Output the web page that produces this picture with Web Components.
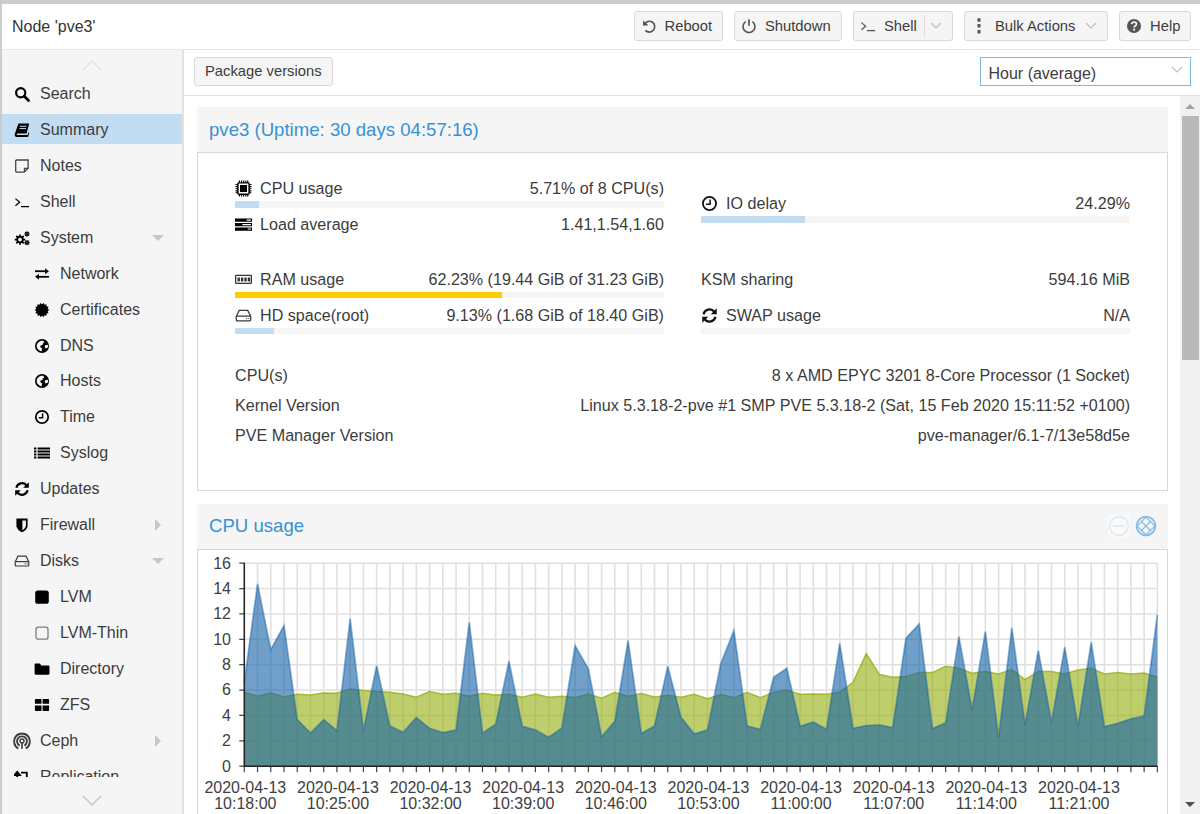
<!DOCTYPE html>
<html><head><meta charset="utf-8"><title>Node pve3</title>
<style>
html,body{margin:0;padding:0;height:814px;overflow:hidden;background:#ccc}
</style></head>
<body>
<pve-app>
  <pve-header slot="header" title-text="Node 'pve3'">
    <pve-button icon="undo" style="--iw:89.5px">Reboot</pve-button>
    <pve-button icon="power" style="--iw:108px">Shutdown</pve-button>
    <pve-button icon="terminal" split style="--iw:100px">Shell</pve-button>
    <pve-button icon="dots" menu style="--iw:144px">Bulk Actions</pve-button>
    <pve-button icon="question" style="--iw:72px">Help</pve-button>
  </pve-header>
  <pve-sidebar slot="side">
    <nav-item icon="search">Search</nav-item>
    <nav-item icon="book" selected>Summary</nav-item>
    <nav-item icon="note">Notes</nav-item>
    <nav-item icon="terminal">Shell</nav-item>
    <nav-item icon="cogs" arrow="down">System</nav-item>
    <nav-item icon="exchange" sub>Network</nav-item>
    <nav-item icon="cert" sub>Certificates</nav-item>
    <nav-item icon="globe" sub>DNS</nav-item>
    <nav-item icon="globe" sub>Hosts</nav-item>
    <nav-item icon="clock" sub>Time</nav-item>
    <nav-item icon="list" sub>Syslog</nav-item>
    <nav-item icon="refresh">Updates</nav-item>
    <nav-item icon="shield" arrow="right">Firewall</nav-item>
    <nav-item icon="hdd" arrow="down">Disks</nav-item>
    <nav-item icon="square" sub>LVM</nav-item>
    <nav-item icon="squareo" sub>LVM-Thin</nav-item>
    <nav-item icon="folder" sub>Directory</nav-item>
    <nav-item icon="th" sub>ZFS</nav-item>
    <nav-item icon="ceph" arrow="right">Ceph</nav-item>
    <nav-item icon="retweet">Replication</nav-item>
  </pve-sidebar>
  <pve-toolbar slot="toolbar">
    <pve-button style="--iw:139px" plain>Package versions</pve-button>
    <pve-combo>Hour (average)</pve-combo>
  </pve-toolbar>
  <pve-panel slot="content" heading="pve3 (Uptime: 30 days 04:57:16)">
    <pve-status>
      <status-col>
        <info-row icon="cpu" label="CPU usage" value="5.71% of 8 CPU(s)" pct="5.71"></info-row>
        <info-row icon="tasks" label="Load average" value="1.41,1.54,1.60"></info-row>
      </status-col>
      <status-col middle>
        <info-row icon="clock" label="IO delay" value="24.29%" pct="24.29"></info-row>
      </status-col>
      <status-col>
        <info-row icon="ram" label="RAM usage" value="62.23% (19.44 GiB of 31.23 GiB)" pct="62.23" warn></info-row>
        <info-row icon="hdd" label="HD space(root)" value="9.13% (1.68 GiB of 18.40 GiB)" pct="9.13"></info-row>
      </status-col>
      <status-col>
        <info-row label="KSM sharing" value="594.16 MiB"></info-row>
        <info-row icon="refresh" label="SWAP usage" value="N/A" pct="0"></info-row>
      </status-col>
    </pve-status>
    <sys-line label="CPU(s)" value="8 x AMD EPYC 3201 8-Core Processor (1 Socket)"></sys-line>
    <sys-line label="Kernel Version" value="Linux 5.3.18-2-pve #1 SMP PVE 5.3.18-2 (Sat, 15 Feb 2020 15:11:52 +0100)"></sys-line>
    <sys-line label="PVE Manager Version" value="pve-manager/6.1-7/13e58d5e"></sys-line>
  </pve-panel>
  <pve-panel slot="content" heading="CPU usage" tools flush>
    <pve-chart></pve-chart>
  </pve-panel>
</pve-app>
<script>
const D='currentColor';
function gear(cx,cy,r,sw){
  const n=8;let d='';
  for(let i=0;i<n;i++){const a=i*Math.PI*2/n;
    d+=`M${(cx+Math.cos(a)*(r-.6)).toFixed(2)} ${(cy+Math.sin(a)*(r-.6)).toFixed(2)}L${(cx+Math.cos(a)*(r+sw)).toFixed(2)} ${(cy+Math.sin(a)*(r+sw)).toFixed(2)}`;}
  return `<path d="${d}" stroke="${D}" stroke-width="${r>3?1.7:1.1}" fill="none"/><circle cx="${cx}" cy="${cy}" r="${r-.7}" fill="none" stroke="${D}" stroke-width="${r>3?1.9:1.1}"/>`;
}
function star(){
  let d='';const n=14;
  for(let i=0;i<n*2;i++){const a=i*Math.PI/n,r=i%2?5.8:7.3;
    d+=(i?'L':'M')+(8+Math.cos(a)*r).toFixed(2)+' '+(8+Math.sin(a)*r).toFixed(2);}
  return `<path d="${d}Z" fill="${D}"/>`;
}
const ICONS={
 search:`<circle cx="6.7" cy="6.7" r="4.6" fill="none" stroke="${D}" stroke-width="2.2"/><path d="M10.3 10.3l4.2 4.2" stroke="${D}" stroke-width="2.8" stroke-linecap="round"/>`,
 book:`<path d="M4.4 1.5H15.2L12.6 11.6H3.6C2.6 11.6 2.5 13 3.4 13H13.6L14.6 10.2 15.3 11 14 15H3C1.2 15 .3 13.7.8 12Z" fill="${D}"/><path d="M6 4.3h6.5M5.5 6.6h6.5" stroke="#c2ddf2" stroke-width="1"/>`,
 note:`<path d="M2.5 2h11.6v8.2l-3.9 3.9H2.5a.8.8 0 0 1-.8-.8V2.8a.8.8 0 0 1 .8-.8Z" fill="none" stroke="#444" stroke-width="1.3"/><path d="M14 10.4h-3.5V14" fill="none" stroke="#444" stroke-width="1.3"/>`,
 terminal:`<path d="M1.4 4.6l4.3 3.6-4.3 3.6" fill="none" stroke="${D}" stroke-width="1.2"/><path d="M7 12.6h8" stroke="${D}" stroke-width="1.3"/>`,
 cogs:`${gear(6,9.6,3.5,1.7)}${gear(13,4,1.7,1)}${gear(13,12.6,1.7,1)}`,
 exchange:`<path d="M1 5.2h10.5" stroke="${D}" stroke-width="1.8"/><path d="M11 2.2l4 3-4 3Z" fill="${D}"/><path d="M15 10.8H4.5" stroke="${D}" stroke-width="1.8"/><path d="M5 7.8l-4 3 4 3Z" fill="${D}"/>`,
 cert:star(),
 globe:`<circle cx="8" cy="8" r="7" fill="${D}"/><path d="M4.2 4.6C5.6 3 7.6 2.6 9.4 3l1 1.5-1.6 1-.3 1.6L6.6 7.4 6.2 9l1.9 1.6-.5 3C5 12.6 3 10.7 2.7 8.4 2.6 7 3.2 5.6 4.2 4.6Z" fill="#f5f5f5"/><path d="M11 7.2l2.8-.4.3 2.4-2 1.4-1.4-1.2Z" fill="#f5f5f5"/>`,
 clock:`<circle cx="8" cy="8" r="6.2" fill="none" stroke="${D}" stroke-width="1.7"/><path d="M8.6 4.2v4.6H4.8" fill="none" stroke="${D}" stroke-width="1.4"/>`,
 list:`<path d="M0 3.4h2.4M0 6.4h2.4M0 9.4h2.4M0 12.4h2.4M3.6 3.4H16M3.6 6.4H16M3.6 9.4H16M3.6 12.4H16" stroke="${D}" stroke-width="2"/>`,
 refresh:`<path d="M2.4 6.8A5.8 5.8 0 0 1 12.4 4.2" fill="none" stroke="${D}" stroke-width="2.2"/><path d="M14.8 1.2v5.6H9.2Z" fill="${D}"/><path d="M13.6 9.2A5.8 5.8 0 0 1 3.6 11.8" fill="none" stroke="${D}" stroke-width="2.2"/><path d="M1.2 14.8V9.2H6.8Z" fill="${D}"/>`,
 shield:`<path d="M2.4 1.6h11.2v7c0 3.4-3 5.6-5.6 6.6-2.6-1-5.6-3.2-5.6-6.6Z" fill="${D}"/><path d="M8.4 3.4h3.5v5.2c0 2.2-1.8 3.7-3.5 4.6Z" fill="#f5f5f5"/>`,
 hdd:`<path d="M4 3.2h8l2.8 5.6V12a1 1 0 0 1-1 1H2.2a1 1 0 0 1-1-1V8.8Z" fill="none" stroke="#3a3a3a" stroke-width="1.2"/><path d="M1.4 8.6h13.2" stroke="#3a3a3a" stroke-width="1.2"/><path d="M10.5 10.8h1M12.5 10.8h1" stroke="#3a3a3a" stroke-width="1"/>`,
 square:`<rect x="1.2" y="1.4" width="13.6" height="13.4" rx="2.6" fill="#000"/>`,
 squareo:`<rect x="2" y="2.2" width="12" height="12" rx="2.2" fill="none" stroke="#7d7d7d" stroke-width="1.3"/>`,
 folder:`<path d="M1.8 2.6h3.6c.6 0 1 .3 1.2.8l.5 1h7.2c.7 0 1.2.5 1.2 1.2v7c0 .7-.5 1.2-1.2 1.2H1.8c-.7 0-1.2-.5-1.2-1.2V3.8c0-.7.5-1.2 1.2-1.2Z" fill="#000"/>`,
 th:`<path d="M1.6 2h5.2c.4 0 .7.3.7.7v4.1H.9V2.7c0-.4.3-.7.7-.7ZM9.3 2h5.1c.4 0 .7.3.7.7v4.1H8.6V2.7c0-.4.3-.7.7-.7ZM.9 8.4h6.6v4.8c0 .4-.3.7-.7.7H1.6c-.4 0-.7-.3-.7-.7ZM8.6 8.4h6.5v4.8c0 .4-.3.7-.7.7H9.3c-.4 0-.7-.3-.7-.7Z" fill="#000"/>`,
 ceph:`<path d="M4.6 14.8A7.2 7.2 0 1 1 11.4 14.8" fill="none" stroke="#3c3c3c" stroke-width="1.8"/><path d="M5.8 12.2A4.5 4.5 0 1 1 10.2 12.2" fill="none" stroke="#3c3c3c" stroke-width="1.7"/><circle cx="8" cy="8" r="1.8" fill="none" stroke="#3c3c3c" stroke-width="1.3"/><path d="M8 9.5V15" stroke="#3c3c3c" stroke-width="1.5"/>`,
 retweet:`<path d="M3.2 4.5V11h6M.4 6.2l2.8-3.4 2.8 3.4Z" fill="none" stroke="${D}" stroke-width="1.8"/><path d="M7 3.6h5.8V10M10 8.8l2.8 3.4 2.8-3.4Z" fill="none" stroke="${D}" stroke-width="1.8"/>`,
 cpu:`<rect x="2.7" y="2.7" width="10.6" height="10.6" rx="1" fill="none" stroke="#000" stroke-width="1.4"/><rect x="4.7" y="4.7" width="6.6" height="6.6" fill="#000"/><path d="M4.2 .5v2.2M6.2 .5v2.2M8.2 .5v2.2M10.2 .5v2.2M12 .5v2.2M4.2 13.3v2.2M6.2 13.3v2.2M8.2 13.3v2.2M10.2 13.3v2.2M12 13.3v2.2M.5 4.2h2.2M.5 6.2h2.2M.5 8.2h2.2M.5 10.2h2.2M.5 12h2.2M13.3 4.2h2.2M13.3 6.2h2.2M13.3 8.2h2.2M13.3 10.2h2.2M13.3 12h2.2" stroke="#000" stroke-width="1.1"/>`,
 tasks:`<path d="M0 2.4h16v3H0zM0 6.6h16v3H0zM0 10.8h16v3H0z" fill="#000"/><path d="M11 3.9h4M7 8.1h8M12 12.3h3" stroke="#fff" stroke-width="1"/>`,
 ram:`<rect x=".6" y="4.2" width="14.8" height="7.4" rx=".6" fill="none" stroke="#333" stroke-width="1.2"/><path d="M2.4 6h2.2v3.8H2.4zM5.6 6h2.2v3.8H5.6zM8.8 6H11v3.8H8.8zM12 6h2.2v3.8H12z" fill="#333"/>`,
 undo:`<path d="M3.4 6.4A5.4 5.4 0 1 1 4.4 12.4" fill="none" stroke="${D}" stroke-width="1.7"/><path d="M2 2.4l.2 5.4 5.2-.6Z" fill="${D}"/>`,
 power:`<path d="M8 1.2v6.6" stroke="${D}" stroke-width="1.7"/><path d="M4.7 3.6a6 6 0 1 0 6.6 0" fill="none" stroke="${D}" stroke-width="1.6"/>`,
 dots:`<path d="M6.5 .2h3v3.6h-3zM6.5 6h3v3.6h-3zM6.5 12h3v3.6h-3z" fill="${D}"/>`,
 question:`<circle cx="8" cy="8" r="7" fill="${D}"/><path d="M5.6 6.1C5.8 4.8 6.9 4.2 8 4.2c1.4 0 2.5.8 2.5 2 0 1.9-2.4 1.8-2.4 3.4" fill="none" stroke="#f5f5f5" stroke-width="1.7"/><rect x="7.1" y="10.6" width="2" height="2" fill="#f5f5f5"/>`
};
function svgIcon(n,size){return `<svg viewBox="0 0 16 16" width="${size||16}" height="${size||16}" aria-hidden="true">${ICONS[n]||''}</svg>`;}
class Base extends HTMLElement{
  connectedCallback(){ if(!this.shadowRoot){this.attachShadow({mode:'open'}).innerHTML=this.render();} }
  attr(n){return this.getAttribute(n);} has(n){return this.hasAttribute(n);}
}
customElements.define('pve-app',class extends Base{render(){return `<style>
:host{display:flex;flex-direction:column;box-sizing:border-box;height:814px;padding:4px 0 0 2px;overflow:hidden;background:#ccc;font:16px "Liberation Sans",Arial,sans-serif;color:#3c3c3c}
.main{flex:1;display:flex;min-height:0;background:#fff}
.right{flex:1;display:flex;flex-direction:column;min-width:0}
.body{flex:1;display:flex;min-height:0}
.scroll{flex:1;min-width:0;overflow:hidden;box-sizing:border-box;padding:11.5px 12px 0 13px;display:flex;flex-direction:column;gap:12.7px}
</style>
<slot name="header"></slot>
<div class="main"><slot name="side"></slot>
<div class="right"><slot name="toolbar"></slot>
<div class="body"><div class="scroll"><slot name="content"></slot></div><pve-scrollbar></pve-scrollbar></div></div></div>`;}});
customElements.define('pve-header',class extends Base{render(){return `<style>
:host{display:flex;align-items:center;box-sizing:border-box;height:46px;padding:0 9px 1px 10px;background:#fff;border-bottom:1.6px solid #e6e6e6;gap:11px}
.t{flex:1;color:#333;padding-top:1px}
</style><div class="t">${this.attr('title-text')}</div><slot></slot>`;}});
customElements.define('pve-button',class extends Base{render(){
 const ic=this.attr('icon');
 const chev=`<svg width="12" height="8" viewBox="0 0 12 8"><path d="M1 1l5 5 5-5" fill="none" stroke="#bdbdbd" stroke-width="1.1"/></svg>`;
 return `<style>
:host{display:flex;align-items:center;box-sizing:border-box;width:var(--iw);height:29.5px;background:#f5f5f5;border:1px solid #d9d9d9;border-radius:3px;color:#3c3c3c;white-space:nowrap;position:relative;font-size:14.77px}
.i{width:16px;height:16px;margin-left:6px;margin-right:8px;color:#555;display:flex;flex:none}
.p{margin-left:10px}
.tail{margin-left:auto;display:flex;align-items:center;height:100%}
.sep{width:1px;height:22px;background:#dcdcdc;margin-right:5px}
.tail svg{margin-right:10px}
</style>${ic?`<span class="i">${svgIcon(ic)}</span>`:'<span class="p"></span>'}<slot></slot>${this.has('split')?`<span class="tail"><span class="sep"></span>${chev}</span>`:this.has('menu')?`<span class="tail">${chev}</span>`:''}`;}});
customElements.define('pve-sidebar',class extends Base{render(){return `<style>
:host{display:flex;flex-direction:column;width:180px;flex:none;background:#f5f5f5;border-right:2px solid #e3e3e3;overflow:hidden}
.a{display:flex;justify-content:center;flex:none}
.top{height:25.3px;box-sizing:border-box;padding-top:9px}
.list{flex:1;min-height:0;overflow:hidden}
.bot{height:37px;box-sizing:border-box;padding-top:17px}
</style><div class="a top"><svg width="22" height="12" viewBox="0 0 22 12"><path d="M2 11L11 2l9 9" fill="none" stroke="#e2e2e2" stroke-width="1.3"/></svg></div>
<div class="list"><slot></slot></div>
<div class="a bot"><svg width="22" height="13" viewBox="0 0 22 13"><path d="M2 2l9 9 9-9" fill="none" stroke="#c4c4c4" stroke-width="1.3"/></svg></div>`;}});
customElements.define('nav-item',class extends Base{render(){
 const a=this.attr('arrow');
 const arrow=a==='down'?`<svg width="14" height="8" viewBox="0 0 14 8"><path d="M1 1h12L7 7Z" fill="#c6c6c6"/></svg>`:a==='right'?`<svg width="8" height="14" viewBox="0 0 8 14"><path d="M1 1v12l6-6Z" fill="#c6c6c6"/></svg>`:'';
 return `<style>
:host{display:flex;align-items:center;height:35.95px;color:#3c3c3c}
.r{display:flex;align-items:center;width:100%;height:30px;box-sizing:border-box;padding-top:1.4px;padding-left:${this.has('sub')?32:12}px;background:${this.has('selected')?'#c2ddf2':'transparent'}}
.i{width:16px;height:16px;display:flex;margin-right:10px;color:#000;flex:none;${this.attr('icon')==='ceph'?'transform:scale(1.1);':''}}
.x{margin-left:auto;width:14px;display:flex;justify-content:center;margin-right:17px}
</style><div class="r"><span class="i">${svgIcon(this.attr('icon'))}</span><slot></slot><span class="x">${arrow}</span></div>`;}});
customElements.define('pve-toolbar',class extends Base{render(){return `<style>
:host{display:flex;align-items:center;justify-content:space-between;box-sizing:border-box;height:45.5px;padding:0 9px 2px 10px;background:#fff;border-bottom:1.6px solid #e3e3e3}
</style><slot></slot>`;}});
customElements.define('pve-combo',class extends Base{render(){return `<style>
:host{display:flex;align-items:center;box-sizing:border-box;width:211px;height:29.5px;border:1.3px solid #7fb8e4;background:#fff;padding:4.5px 7px 0 7.5px;color:#3c3c3c;justify-content:space-between}
svg{margin-bottom:7.5px}
</style><slot></slot><svg width="12" height="8" viewBox="0 0 12 8"><path d="M1 1l5 5 5-5" fill="none" stroke="#bdbdbd" stroke-width="1.1"/></svg>`;}});
customElements.define('pve-panel',class extends Base{render(){
 const tools=this.has('tools')?`<span class="tools">
 <svg width="22" height="22" viewBox="0 0 22 22"><rect width="22" height="22" fill="#fafafa"/><circle cx="11" cy="11" r="9.4" fill="none" stroke="#dbeaf4" stroke-width="1.6"/><path d="M5 11h12" stroke="#dbeaf4" stroke-width="1.6"/></svg>
 <svg width="22" height="22" viewBox="0 0 22 22"><circle cx="11" cy="11" r="9.4" fill="none" stroke="#84bbe5" stroke-width="1.8"/><path d="M11 2L20 11 11 20 2 11ZM6 6l10 10M16 6 6 16" fill="none" stroke="#84bbe5" stroke-width="1.2"/></svg></span>`:'';
 return `<style>
:host{display:flex;flex-direction:column;flex:none;font-size:16.12px}
.h{display:flex;align-items:center;height:45px;box-sizing:border-box;background:#f5f5f5;padding:0 11px 0 12px;color:#3892d4;font-size:18.6px;justify-content:space-between}
.tools{display:flex;gap:5px}
.b{border:1px solid #d8d8d8;background:#fff;${this.has('flush')?'':'padding:23.3px 37px 40px;'}}
</style><div class="h"><span>${this.attr('heading')}</span>${tools}</div><div class="b"><slot></slot></div>`;}});
customElements.define('pve-status',class extends Base{render(){return `<style>
:host{display:grid;grid-template-columns:1fr 1fr;column-gap:37px;row-gap:18.6px;margin-bottom:21.1px}
</style><slot></slot>`;}});
customElements.define('status-col',class extends Base{render(){return `<style>
:host{display:flex;flex-direction:column;${this.has('middle')?'justify-content:center;padding-bottom:6px;box-sizing:border-box;':''}}
</style><slot></slot>`;}});
customElements.define('info-row',class extends Base{render(){
 const ic=this.attr('icon'),p=this.attr('pct');
 return `<style>
:host{display:block;height:36px;box-sizing:border-box}
.l{display:flex;align-items:center;justify-content:space-between;box-sizing:border-box;height:25.2px;padding-top:0;white-space:nowrap}
.n{display:flex;align-items:center}
.i{width:17px;height:17px;margin-right:8px;display:flex;color:#111}
.bar{height:6.3px;background:#f5f5f5}
.fill{height:100%;background:${this.has('warn')?'#ffcc00':'#c2ddf2'}}
</style><div class="l"><span class="n">${ic?`<span class="i">${svgIcon(ic,17)}</span>`:''}${this.attr('label')}</span><span>${this.attr('value')}</span></div>${p!==null?`<div class="bar"><div class="fill" style="width:${p}%"></div></div>`:''}`;}});
customElements.define('sys-line',class extends Base{render(){return `<style>
:host{display:flex;justify-content:space-between;align-items:center;box-sizing:border-box;height:30px;padding-top:1.2px;white-space:nowrap}
</style><span>${this.attr('label')}</span><span>${this.attr('value')}</span>`;}});
customElements.define('pve-scrollbar',class extends Base{render(){return `<style>
:host{display:flex;flex-direction:column;align-items:center;width:20px;flex:none;background:#f1f1f1;box-sizing:border-box;padding-top:8.5px;padding-bottom:7px}
.t{width:17px;height:244px;background:#b9b9b9;margin-top:6.5px}
.s{flex:1}
</style><svg width="10" height="5" viewBox="0 0 10 5"><path d="M0 5L5 0l5 5Z" fill="#a3a3a3"/></svg><div class="t"></div><div class="s"></div><svg width="10" height="5" viewBox="0 0 10 5"><path d="M0 0l5 5 5-5Z" fill="#505050"/></svg>`;}});
customElements.define('pve-chart',class extends Base{render(){
 const blue=[545,250,447,375,657,697,657,690,355,690,495,676,695,651,683,696,688,365,697,671,482,677,688,710,682,435,505,708,662,420,698,676,497,650,700,688,490,390,676,686,530,503,677,664,686,428,683,675,673,681,413,370,684,667,408,628,393,710,382,672,450,665,440,677,425,678,668,655,646,342];
 const olive=[575,587,577,589,581,583,577,578,565,570,573,575,580,590,573,581,578,587,578,583,581,590,580,590,587,591,580,593,575,587,579,589,584,590,581,594,582,591,575,591,575,569,581,580,581,574,545,459,522,530,528,516,516,497,503,518,513,520,507,537,513,513,520,508,503,520,516,520,517,530];
 const X0=46.3,DX=13.233,Y0=216.2,YT=13.2,U=(Y0-YT)/16;
 const xs=i=>+(X0+DX*i).toFixed(2), ys=z=>+(z/3-49.4).toFixed(2);
 const pts=a=>a.map((z,i)=>xs(i)+','+ys(z)).join(' ');
 const right=xs(69);
 let g='',ax='',tx='';
 for(let i=0;i<=69;i++){const x=xs(i);g+=`M${x} ${YT}V${Y0}`;ax+=`M${x} ${Y0}v6`;}
 for(let v=0;v<=16;v+=2){const y=+(Y0-v*U).toFixed(2);g+=`M${X0} ${y}H${right}`;ax+=`M${X0-5} ${y}H${X0}`;tx+=`<text x="33" y="${(y+5.4).toFixed(2)}" text-anchor="end">${v}</text>`;}
 const times=['10:18:00','10:25:00','10:32:00','10:39:00','10:46:00','10:53:00','11:00:00','11:07:00','11:14:00','11:21:00'];
 times.forEach((t,k)=>{const x=xs(k*7)+1;tx+=`<text x="${x}" y="243.2" text-anchor="middle">2020-04-13</text><text x="${x}" y="259" text-anchor="middle">${t}</text>`;});
 const area=a=>`${X0},${Y0} ${pts(a)} ${right},${Y0}`;
 return `<style>
:host{display:block;height:270px}
svg{display:block;font:16px "Liberation Sans",Arial,sans-serif;fill:#404040}
</style><svg width="969" height="270" viewBox="0 0 969 270">
<path d="${g}" stroke="#e0e0e0" stroke-width="1.6" fill="none"/>
<polygon points="${area(olive)}" fill="#94ae0a" fill-opacity=".6" stroke="none"/>
<polyline points="${pts(olive)}" fill="none" stroke="#94ae0a" stroke-opacity=".75" stroke-width="1.5"/>
<polygon points="${area(blue)}" fill="#115fa6" fill-opacity=".6" stroke="none"/>
<polyline points="${pts(blue)}" fill="none" stroke="#115fa6" stroke-opacity=".45" stroke-width="1.8"/>
<path d="${ax}" stroke="#444" stroke-width="1.2" fill="none"/>
<path d="M${X0} ${YT-.5}V${Y0}H${right}" stroke="#222" stroke-width="1.5" fill="none"/>
${tx}</svg>`;}});
</script>
</body></html>
